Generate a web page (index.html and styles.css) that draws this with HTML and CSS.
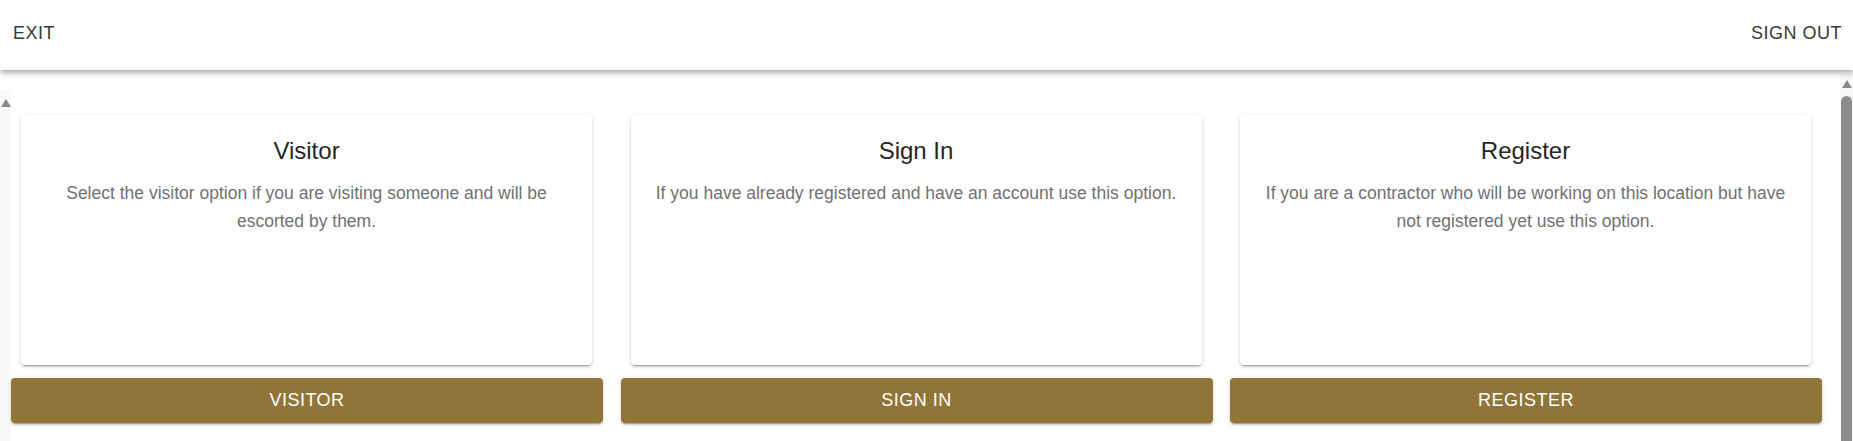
FILE: index.html
```html
<!DOCTYPE html>
<html lang="en">
<head>
<meta charset="utf-8">
<title>Kiosk</title>
<link rel="stylesheet" href="styles.css">
</head>
<body>
<header class="topbar">
  <button class="textbtn">Exit</button>
  <button class="textbtn">Sign Out</button>
</header>
<div class="main">
  <div class="leftstrip"><span class="arrow"></span></div>
  <div class="content">
    <div class="col">
      <div class="card">
        <h2 class="card-title">Visitor</h2>
        <p class="card-text">Select the visitor option if you are visiting someone and will be escorted by them.</p>
      </div>
      <button class="action">Visitor</button>
    </div>
    <div class="col">
      <div class="card">
        <h2 class="card-title">Sign In</h2>
        <p class="card-text">If you have already registered and have an account use this option.</p>
      </div>
      <button class="action">Sign In</button>
    </div>
    <div class="col">
      <div class="card">
        <h2 class="card-title">Register</h2>
        <p class="card-text">If you are a contractor who will be working on this location but have not registered yet use this option.</p>
      </div>
      <button class="action">Register</button>
    </div>
  </div>
  <div class="scrollbar"><span class="arrow"></span><span class="thumb"></span></div>
</div>
</body>
</html>
```
FILE: styles.css
```css
html, body {
  margin: 0;
  padding: 0;
  height: 100%;
  overflow: hidden;
}
body {
  background: #ffffff;
  font-family: "Liberation Sans", Arial, sans-serif;
  display: flex;
  flex-direction: column;
}
.topbar {
  height: 70px;
  flex: none;
  background: #fff;
  display: flex;
  align-items: center;
  justify-content: space-between;
  padding: 0 3px 4px 5px;
  box-sizing: border-box;
  box-shadow: 0 2px 4px -1px rgba(0,0,0,0.2), 0 4px 5px 0 rgba(0,0,0,0.14), 0 1px 10px 0 rgba(0,0,0,0.12);
  position: relative;
  z-index: 2;
}
.textbtn {
  background: none;
  border: 0;
  font-family: "Liberation Sans", Arial, sans-serif;
  font-size: 18px;
  letter-spacing: 0.5px;
  text-transform: uppercase;
  color: #383838;
  padding: 6px 8px;
  line-height: 20px;
}
.main {
  flex: 1;
  display: flex;
  min-height: 0;
}
.leftstrip {
  width: 11px;
  flex: none;
  margin-top: 20px;
  background: #f9f9f9;
  display: flex;
  flex-direction: column;
  align-items: center;
  padding-top: 9px;
  box-sizing: border-box;
}
.arrow {
  width: 0;
  height: 0;
  border-left: 5px solid transparent;
  border-right: 5px solid transparent;
  border-bottom: 8px solid #8a8a8a;
}
.content {
  flex: 1;
  display: grid;
  grid-template-columns: 1fr 1fr 1fr;
  column-gap: 17.5px;
  padding: 45px 18px 0 0;
  align-content: start;
}
.col {
  display: flex;
  flex-direction: column;
}
.card {
  margin: 0 11px 0 10px;
  height: 250px;
  box-sizing: border-box;
  background: #fff;
  border-radius: 4px;
  padding: 20px 19px;
  text-align: center;
  box-shadow: 0 3px 1px -2px rgba(0,0,0,0.2), 0 2px 2px 0 rgba(0,0,0,0.14), 0 1px 5px 0 rgba(0,0,0,0.12);
}
.card-title {
  margin: 0 0 12px;
  font-size: 24px;
  font-weight: 400;
  line-height: 32px;
  color: #262626;
}
.card-text {
  margin: 0;
  font-size: 17.5px;
  line-height: 28px;
  color: #717171;
}
.action {
  margin-top: 13px;
  height: 45px;
  border: 0;
  border-radius: 4px;
  background: #917538;
  color: #fff;
  font-family: "Liberation Sans", Arial, sans-serif;
  font-size: 18px;
  letter-spacing: 0.5px;
  text-transform: uppercase;
  box-shadow: 0 3px 1px -2px rgba(0,0,0,0.2), 0 2px 2px 0 rgba(0,0,0,0.14), 0 1px 5px 0 rgba(0,0,0,0.12);
  padding: 0;
}
.scrollbar {
  width: 13px;
  flex: none;
  margin-top: 3px;
  background: #f9f9f9;
  display: flex;
  flex-direction: column;
  align-items: center;
  padding-top: 7px;
  box-sizing: border-box;
}
.thumb {
  margin-top: 8px;
  width: 11px;
  flex: 1;
  background: #8c8c8c;
  border-radius: 6px 6px 0 0;
}
```
